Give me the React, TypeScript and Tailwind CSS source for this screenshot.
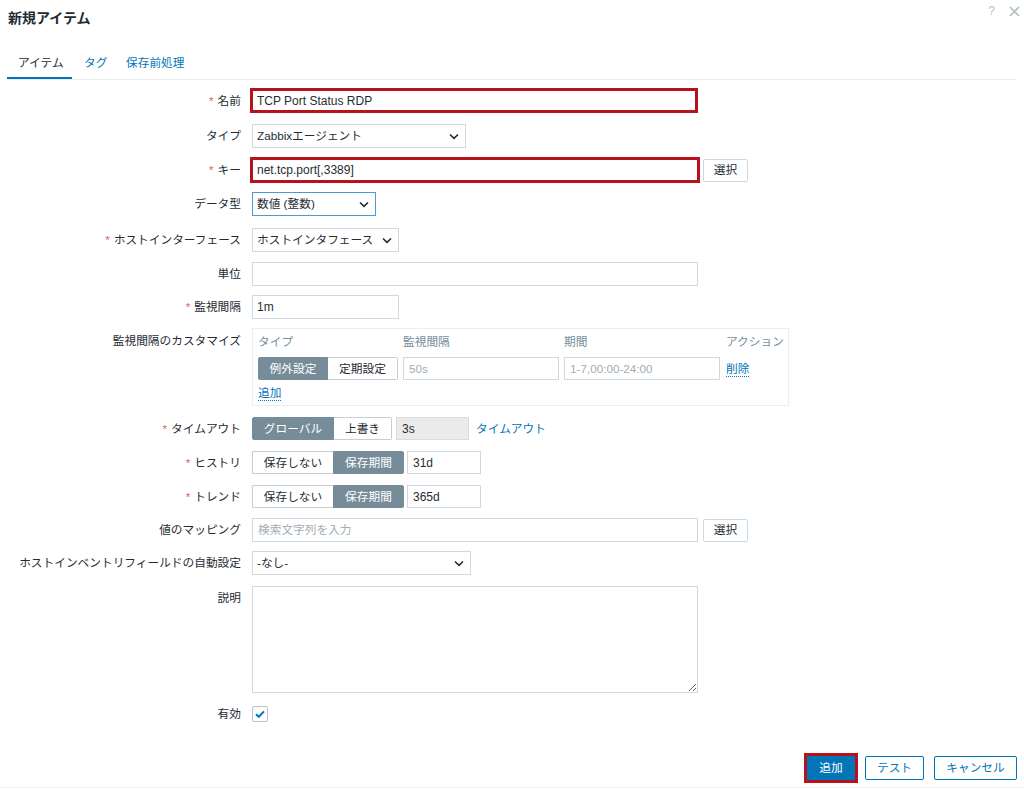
import React from "react";

const Chevron = () => (
  <svg width="10" height="7" viewBox="0 0 10 7" className="shrink-0">
    <path d="M1 1.5 L5 5.3 L9 1.5" fill="none" stroke="#1f2c33" strokeWidth="1.6" />
  </svg>
);

function Label({ text, req, className = "" }: { text: string; req?: boolean; className?: string }) {
  return (
    <div className={"w-[241px] shrink-0 text-right leading-[16px] " + className}>
      {req && <span className="text-[#e45959] mr-[4px]">*</span>}
      {text}
    </div>
  );
}

function Row({ mt, label, req, children }: { mt: string; label: string; req?: boolean; children: React.ReactNode }) {
  return (
    <div className={"flex items-center " + mt}>
      <Label text={label} req={req} />
      {children}
    </div>
  );
}

function Select({ w, text, focus }: { w: string; text: string; focus?: boolean }) {
  return (
    <div
      className={
        "ml-[11px] h-[24px] bg-white flex items-center justify-between pl-[4px] pr-[6px] border " +
        w +
        (focus ? " border-[#4a9bd1]" : " border-[#cfd9df]")
      }
    >
      <span className="whitespace-nowrap">{text}</span>
      <Chevron />
    </div>
  );
}

function Btn({ children, className = "" }: { children: React.ReactNode; className?: string }) {
  return (
    <div
      className={
        "h-[23px] border border-[#cfd9df] rounded-[2px] bg-white flex items-center justify-center text-[#1f2c33] " +
        className
      }
    >
      {children}
    </div>
  );
}

export default function App() {
  return (
    <div className="relative w-[1024px] h-[789px] bg-white text-[11.7px] text-[#1f2c33] font-['Liberation_Sans','Noto_Sans_CJK_JP',sans-serif] overflow-hidden">
      {/* header */}
      <div className="h-[48px] pl-[8px] pr-[4px] flex items-start justify-between">
        <div className="pt-[10px] text-[14px] leading-[16px] font-bold">新規アイテム</div>
        <div className="flex items-center gap-[14px] pt-[4px] text-[#b3bec4]">
          <span className="text-[12px] leading-[14px]">?</span>
          <svg width="11" height="11" viewBox="0 0 11 11">
            <path d="M1 1 L10 10 M10 1 L1 10" stroke="#b3bec4" strokeWidth="1.6" />
          </svg>
        </div>
      </div>

      {/* tabs */}
      <div className="mx-[7px] h-[32px] flex border-b border-[#ebeef0]">
        <div className="w-[65px] pl-[11px] pt-[7px] border-b-2 border-[#0275b8] text-[#1f2c33] leading-[16px] whitespace-nowrap">
          アイテム
        </div>
        <div className="w-[54px] pl-[12px] pt-[7px] text-[#0275b8] leading-[16px]">タグ</div>
        <div className="pt-[7px] text-[#0275b8] leading-[16px]">保存前処理</div>
      </div>

      {/* form */}
      <div className="flex flex-col">
        <Row mt="mt-[8px]" label="名前" req>
          <div className="ml-[9px] w-[448px] h-[25px] border-[3px] border-[#b5121b] pl-[4px] flex items-center text-[12px]">
            TCP Port Status RDP
          </div>
        </Row>

        <Row mt="mt-[11px]" label="タイプ">
          <Select w="w-[214px]" text="Zabbixエージェント" />
        </Row>

        <Row mt="mt-[9px]" label="キー" req>
          <div className="ml-[9px] w-[450px] h-[26px] border-[3px] border-[#b5121b] pl-[4px] flex items-center text-[12px]">
            net.tcp.port[,3389]
          </div>
          <Btn className="ml-[3px] w-[45px]">選択</Btn>
        </Row>

        <Row mt="mt-[9px]" label="データ型">
          <Select w="w-[124px]" text="数値 (整数)" focus />
        </Row>

        <Row mt="mt-[12px]" label="ホストインターフェース" req>
          <Select w="w-[147px]" text="ホストインタフェース" />
        </Row>

        <Row mt="mt-[10px]" label="単位">
          <div className="ml-[11px] w-[446px] h-[24px] border border-[#cfd9df]" />
        </Row>

        <Row mt="mt-[9px]" label="監視間隔" req>
          <div className="ml-[11px] w-[147px] h-[24px] border border-[#cfd9df] pl-[4px] flex items-center text-[12px]">1m</div>
        </Row>

        {/* custom intervals */}
        <div className="flex items-start mt-[9px]">
          <Label text="監視間隔のカスタマイズ" className="pt-[5px]" />
          <div className="ml-[11px] w-[537px] h-[78px] border border-[#ebeef0] pl-[5px] pt-[5px]">
            <div className="flex h-[16px] leading-[16px] text-[#768d99]">
              <div className="w-[145px]">タイプ</div>
              <div className="w-[161px]">監視間隔</div>
              <div className="w-[162px]">期間</div>
              <div>アクション</div>
            </div>
            <div className="flex items-center mt-[7px] h-[23px]">
              <div className="flex h-[23px]">
                <div className="w-[70px] bg-[#768d99] border border-[#768d99] rounded-l-[2px] text-white flex items-center justify-center">
                  例外設定
                </div>
                <div className="w-[70px] border border-l-0 border-[#c5ced3] rounded-r-[2px] flex items-center justify-center">
                  定期設定
                </div>
              </div>
              <div className="ml-[5px] w-[156px] h-[23px] border border-[#cfd9df] pl-[5px] flex items-center text-[#a3adb4]">
                50s
              </div>
              <div className="ml-[5px] w-[156px] h-[23px] border border-[#cfd9df] pl-[5px] flex items-center text-[#a3adb4]">
                1-7,00:00-24:00
              </div>
              <span className="ml-[6px] text-[#0275b8] underline decoration-dotted underline-offset-[3px]">削除</span>
            </div>
            <div className="mt-[5px] leading-[16px]">
              <span className="text-[#0275b8] underline decoration-dotted underline-offset-[3px]">追加</span>
            </div>
          </div>
        </div>

        <Row mt="mt-[11px]" label="タイムアウト" req>
          <div className="ml-[11px] flex h-[23px]">
            <div className="w-[82px] bg-[#768d99] border border-[#768d99] rounded-l-[2px] text-white flex items-center justify-center">
              グローバル
            </div>
            <div className="w-[58px] border border-l-0 border-[#c5ced3] rounded-r-[2px] bg-white flex items-center justify-center">
              上書き
            </div>
          </div>
          <div className="ml-[4px] w-[73px] h-[23px] border border-[#dcdcdc] bg-[#ebebeb] pl-[5px] flex items-center text-[12px]">3s</div>
          <span className="ml-[7px] text-[#0275b8]">タイムアウト</span>
        </Row>

        <Row mt="mt-[11px]" label="ヒストリ" req>
          <div className="ml-[11px] flex h-[23px]">
            <div className="w-[81px] border border-r-0 border-[#c5ced3] rounded-l-[2px] bg-white flex items-center justify-center">
              保存しない
            </div>
            <div className="w-[71px] bg-[#768d99] border border-[#768d99] rounded-r-[2px] text-white flex items-center justify-center">
              保存期間
            </div>
          </div>
          <div className="ml-[3px] w-[74px] h-[23px] border border-[#cfd9df] pl-[5px] flex items-center text-[12px]">31d</div>
        </Row>

        <Row mt="mt-[11px]" label="トレンド" req>
          <div className="ml-[11px] flex h-[23px]">
            <div className="w-[81px] border border-r-0 border-[#c5ced3] rounded-l-[2px] bg-white flex items-center justify-center">
              保存しない
            </div>
            <div className="w-[71px] bg-[#768d99] border border-[#768d99] rounded-r-[2px] text-white flex items-center justify-center">
              保存期間
            </div>
          </div>
          <div className="ml-[3px] w-[74px] h-[23px] border border-[#cfd9df] pl-[5px] flex items-center text-[12px]">365d</div>
        </Row>

        <Row mt="mt-[10px]" label="値のマッピング">
          <div className="ml-[11px] w-[446px] h-[24px] border border-[#cfd9df] pl-[5px] flex items-center text-[#a3adb4]">
            検索文字列を入力
          </div>
          <Btn className="ml-[5px] w-[45px]">選択</Btn>
        </Row>

        <Row mt="mt-[9px]" label="ホストインベントリフィールドの自動設定">
          <Select w="w-[219px]" text="-なし-" />
        </Row>

        <div className="flex items-start mt-[11px]">
          <Label text="説明" className="pt-[4px]" />
          <textarea
            readOnly
            className="ml-[11px] w-[446px] h-[107px] border border-[#cfd9df] outline-none"
          />
        </div>

        <Row mt="mt-[13px]" label="有効">
          <div className="ml-[11px] w-[16px] h-[16px] border border-[#b8c4cb] rounded-[2px] flex items-center justify-center">
            <svg width="10" height="8" viewBox="0 0 10 8">
              <path d="M1 4.2 L3.8 6.8 L9 1.4" fill="none" stroke="#0275b8" strokeWidth="2" />
            </svg>
          </div>
        </Row>
      </div>

      {/* footer */}
      <div className="mt-[31px] h-[30px] pr-[7px] flex items-center justify-end">
        <div className="w-[54px] h-[30px] border-[3px] border-[#b5121b] bg-[#0275b8] text-white flex items-center justify-center">
          追加
        </div>
        <div className="ml-[7px] w-[59px] h-[24px] border border-[#0275b8] rounded-[2px] text-[#0275b8] flex items-center justify-center">
          テスト
        </div>
        <div className="ml-[10px] w-[83px] h-[24px] border border-[#0275b8] rounded-[2px] text-[#0275b8] flex items-center justify-center">
          キャンセル
        </div>
      </div>
      <div className="absolute left-0 right-0 bottom-[1px] h-[1px] bg-[#eef4f8]" />
    </div>
  );
}
